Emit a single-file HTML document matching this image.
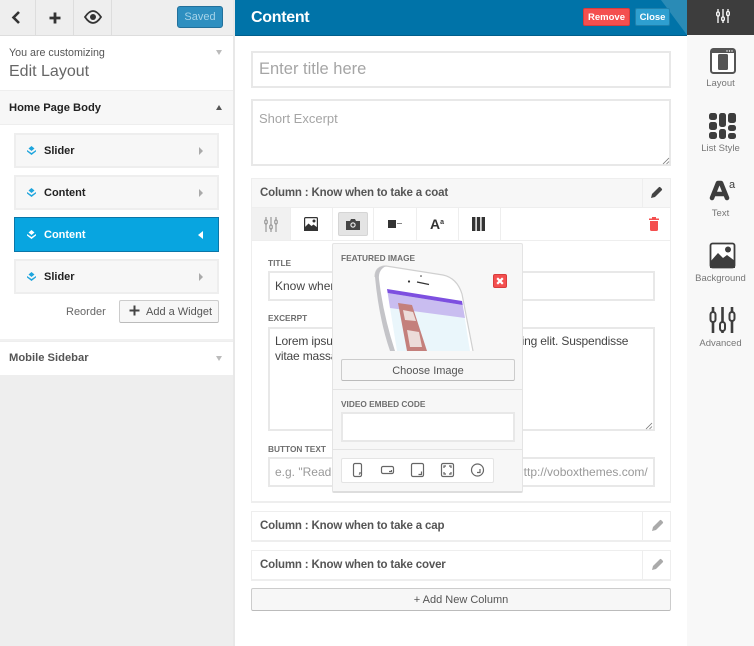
<!DOCTYPE html>
<html><head><meta charset="utf-8"><style>
html,body{margin:0;padding:0;background:#fff}
body{width:754px;height:646px;overflow:hidden;position:relative;font-family:"Liberation Sans",sans-serif;color:#444}
.a{position:absolute;box-sizing:border-box}
.t{position:absolute;white-space:nowrap;line-height:1}
.w{position:absolute;left:14px;width:205px;height:35px;background:#f7f7f7;border:2px solid #eee;box-sizing:border-box}
.w .n{position:absolute;left:28px;top:9px;font-size:11px;font-weight:bold;color:#222;line-height:14px}
.w svg.i{position:absolute;left:11px;top:11px}
.w .ar{position:absolute;right:14px;top:12px;width:0;height:0;border-left:4.5px solid #aaa;border-top:4px solid transparent;border-bottom:4px solid transparent}
.lb{position:absolute;font-size:8.3px;font-weight:bold;color:#6e6e6e;line-height:10px;white-space:nowrap}
.sl{position:absolute;font-size:9.5px;color:#777;width:67px;left:687px;text-align:center;line-height:10px}
.inp{position:absolute;background:#fff;border:2px solid #e8e8e8;box-sizing:border-box}
.ch{position:absolute;left:251px;width:420px;height:31px;background:#fff;border:1px solid #eee;border-bottom:2px solid #eee;box-sizing:border-box}
.ch .n{position:absolute;left:8px;top:7px;font-size:11.5px;letter-spacing:-.17px;font-weight:bold;color:#555;line-height:14px;white-space:nowrap}
.ch .d{position:absolute;right:27px;top:0;bottom:0;width:1px;background:#eee}
.tabd{position:absolute;top:208px;height:32px;width:1px;background:#eee}
</style></head><body>

<!-- left panel -->
<div class="a" style="left:0;top:0;width:235px;height:646px;background:#eee;border-right:2px solid #e8e8e8"></div>
<div class="a" style="left:0;top:0;width:233px;height:36px;background:#eee;border-bottom:1px solid #ddd"></div>
<div class="a" style="left:35px;top:0;width:1px;height:35px;background:#ddd"></div>
<div class="a" style="left:73px;top:0;width:1px;height:35px;background:#ddd"></div>
<div class="a" style="left:111px;top:0;width:1px;height:35px;background:#ddd"></div>
<svg class="a" style="left:11px;top:10px" width="10" height="15"><path d="M8 2 L2.500 7.500 L8 13" fill="none" stroke="#333" stroke-width="2.600"/></svg>
<svg class="a" style="left:49px;top:12px" width="12" height="12"><path d="M6 0.500V11.500M0.500 6H11.500" stroke="#333" stroke-width="2.800"/></svg>
<svg class="a" style="left:84px;top:10px" width="18" height="14"><path d="M1 7C4 2.500 6.500 1 9 1s5 1.500 8 6c-3 4.500-5.500 6-8 6S4 11.500 1 7z" fill="none" stroke="#333" stroke-width="1.800"/><circle cx="9" cy="7" r="3" fill="#333"/></svg>
<div class="a" style="left:177px;top:6px;width:46px;height:22px;background:#2e8fc0;border:1px solid #22709b;border-radius:3px;color:#a6d3e8;font-size:11px;text-align:center;line-height:21px">Saved</div>

<div class="a" style="left:0;top:36px;width:233px;height:55px;background:#fff;border-bottom:1px solid #eee"></div>
<div class="t" style="left:9px;top:48px;font-size:10.7px;color:#555">You are customizing</div>
<div class="t" style="left:9px;top:64px;font-size:16px;color:#666">Edit Layout</div>
<div class="a" style="left:216px;top:50px;width:0;height:0;border-top:5px solid #bbb;border-left:3.500px solid transparent;border-right:3.500px solid transparent"></div>

<div class="a" style="left:0;top:91px;width:233px;height:34px;background:#f7f7f7;border-bottom:1px solid #eee"></div>
<div class="t" style="left:9px;top:103px;font-size:11.2px;font-weight:bold;color:#222">Home Page Body</div>
<div class="a" style="left:216px;top:105px;width:0;height:0;border-bottom:5px solid #555;border-left:3.500px solid transparent;border-right:3.500px solid transparent"></div>

<div class="a" style="left:0;top:125px;width:233px;height:216px;background:#fff;border-bottom:2px solid #f1f1f1"></div>
<div class="w" style="top:133px"><svg class="i" width="9" height="9"><path d="M4.500 0L7.500 2.500L4.500 5L1.500 2.500Z" fill="#1ea5dd"/><path d="M0 4L4.500 7L9 4V5.500L4.500 9L0 5.500Z" fill="#1ea5dd"/></svg><div class="n">Slider</div><div class="ar"></div></div>
<div class="w" style="top:175px"><svg class="i" width="9" height="9"><path d="M4.500 0L7.500 2.500L4.500 5L1.500 2.500Z" fill="#1ea5dd"/><path d="M0 4L4.500 7L9 4V5.500L4.500 9L0 5.500Z" fill="#1ea5dd"/></svg><div class="n">Content</div><div class="ar"></div></div>
<div class="w" style="top:217px;background:#08a5e0;border:1px solid #0a76a8"><svg class="i" style="left:12px;top:12px" width="9" height="9"><path d="M4.500 0L7.500 2.500L4.500 5L1.500 2.500Z" fill="#fff"/><path d="M0 4L4.500 7L9 4V5.500L4.500 9L0 5.500Z" fill="#fff"/></svg><div class="n" style="left:29px;top:10px;color:#fff">Content</div><div class="ar" style="right:15px;top:13px;border-left:0;border-right:5px solid #fff"></div></div>
<div class="w" style="top:259px"><svg class="i" width="9" height="9"><path d="M4.500 0L7.500 2.500L4.500 5L1.500 2.500Z" fill="#1ea5dd"/><path d="M0 4L4.500 7L9 4V5.500L4.500 9L0 5.500Z" fill="#1ea5dd"/></svg><div class="n">Slider</div><div class="ar"></div></div>

<div class="t" style="left:66px;top:307px;font-size:11px;color:#666">Reorder</div>
<div class="a" style="left:119px;top:300px;width:100px;height:23px;background:#f7f7f7;border:1px solid #ccc;border-bottom-color:#bbb;border-radius:2px"></div>
<svg class="a" style="left:129px;top:305px" width="11" height="11"><path d="M5.500 0.500V10.500M0.500 5.500H10.500" stroke="#444" stroke-width="2"/></svg>
<div class="t" style="left:146px;top:307px;font-size:11px;color:#555">Add a Widget</div>

<div class="a" style="left:0;top:342px;width:233px;height:33px;background:#fff"></div>
<div class="t" style="left:9px;top:353px;font-size:11.200px;font-weight:bold;color:#555">Mobile Sidebar</div>
<div class="a" style="left:216px;top:356px;width:0;height:0;border-top:5px solid #bbb;border-left:3.500px solid transparent;border-right:3.500px solid transparent"></div>

<!-- header -->
<div class="a" style="left:235px;top:0;width:452px;height:36px;background:#0073a8;border-bottom:1px solid #005f8c"></div>
<svg class="a" style="left:661px;top:0" width="26" height="35"><path d="M0 0H26V35Z" fill="#2a8bb6"/></svg>
<div class="t" style="left:251px;top:10px;font-size:16px;font-weight:bold;color:#fff;letter-spacing:-.3px">Content</div>
<div class="a" style="left:583px;top:8px;width:47px;height:18px;background:#f44f4f;border:1px solid #d83c3c;border-radius:2px;color:#fff;font-size:9.500px;font-weight:bold;text-align:center;line-height:17px">Remove</div>
<div class="a" style="left:635px;top:8px;width:35px;height:18px;background:#2e9fd0;border:1px solid #1f81ad;border-radius:2px;color:#fff;font-size:9.500px;font-weight:bold;text-align:center;line-height:17px">Close</div>

<!-- right sidebar -->
<div class="a" style="left:687px;top:0;width:67px;height:646px;background:#f8f8f8"></div>
<div class="a" style="left:687px;top:0;width:67px;height:35px;background:#3d3d3d"></div>
<svg class="a" style="left:716px;top:8px" width="14" height="16" fill="none" stroke="#fff" stroke-width="1.300"><path d="M2 1V4M2 8V15M7 1V9M7 12.500V15M12 1V3.500M12 7.500V15"/><rect x="0.700" y="4" width="2.600" height="4" rx="1.300"/><rect x="5.700" y="9" width="2.600" height="3.500" rx="1.300"/><rect x="10.700" y="3.500" width="2.600" height="4" rx="1.300"/></svg>

<svg class="a" style="left:709px;top:48px" width="27" height="26"><rect x="2" y="1" width="24" height="24" rx="2.500" fill="#fff" stroke="#555" stroke-width="2"/><path d="M2 3.500Q2 1 4.500 1H23.500Q26 1 26 3.500V5H2Z" fill="#555"/><rect x="9" y="6" width="10" height="16" rx="1.500" fill="#555"/><circle cx="18" cy="3" r=".7" fill="#fff"/><circle cx="20.500" cy="3" r=".7" fill="#fff"/><circle cx="23" cy="3" r=".7" fill="#fff"/></svg>
<div class="sl" style="top:79px">Layout</div>

<svg class="a" style="left:709px;top:112px" width="27" height="27" fill="#3d3d3d"><rect x="0" y="1" width="8" height="7" rx="2.500"/><rect x="0" y="10" width="8" height="8" rx="2.500"/><rect x="0" y="20" width="8" height="7" rx="2.500"/><rect x="10" y="1" width="7" height="14" rx="2.500"/><rect x="10" y="17" width="7" height="10" rx="2.500"/><rect x="19" y="1" width="8" height="10" rx="2.500"/><rect x="19" y="13" width="8" height="6" rx="2.500"/><rect x="19" y="21" width="8" height="6" rx="2.500"/></svg>
<div class="sl" style="top:144px">List Style</div>

<svg class="a" style="left:709px;top:179px" width="24" height="24"><path d="M3 19L9 4H12L18 19M6.500 15H14.500" fill="none" stroke="#3d3d3d" stroke-width="4.600" stroke-linejoin="round" stroke-linecap="round"/></svg>
<div class="t" style="left:729px;top:180px;font-size:11px;color:#3d3d3d">a</div>
<div class="sl" style="top:209px">Text</div>

<svg class="a" style="left:709px;top:242px" width="27" height="27"><rect x="1.500" y="1.500" width="24" height="24" rx="2" fill="#fff" stroke="#3d3d3d" stroke-width="1.800"/><circle cx="19" cy="7.500" r="3" fill="#3d3d3d"/><path d="M1 20L9 11L14 16L18 13L26 19V26H1Z" fill="#3d3d3d"/></svg>
<div class="sl" style="top:274px">Background</div>

<svg class="a" style="left:709px;top:307px" width="27" height="27" fill="none" stroke="#3d3d3d"><path d="M4 0V5M4 15V26M13.500 0V16M13.500 23V26M23 0V5M23 14V26" stroke-width="2.600"/><rect x="1.500" y="5" width="5" height="10" rx="2.500" stroke-width="2"/><rect x="11" y="15" width="5" height="9" rx="2.500" stroke-width="2"/><rect x="20.500" y="5" width="5" height="9" rx="2.500" stroke-width="2"/></svg>
<div class="sl" style="top:339px">Advanced</div>

<!-- title / excerpt -->
<div class="inp" style="left:251px;top:51px;width:420px;height:37px"></div>
<div class="t" style="left:259px;top:61px;font-size:16.500px;color:#a5a5a5">Enter title here</div>
<div class="inp" style="left:251px;top:99px;width:420px;height:67px"></div>
<div class="t" style="left:259px;top:112px;font-size:13px;color:#a5a5a5">Short Excerpt</div>
<svg class="a" style="left:662px;top:157px" width="8" height="8"><path d="M1 7L7 1M4.500 7L7 4.500" stroke="#777" stroke-width=".8"/></svg>

<!-- open column -->
<div class="a" style="left:251px;top:178px;width:420px;height:325px;background:#fff;border:1px solid #eee;border-bottom-width:2px"></div>
<div class="a" style="left:252px;top:179px;width:418px;height:29px;background:#f7f7f7;border-bottom:1px solid #eee"></div>
<div class="t" style="left:260px;top:188px;font-size:11.500px;letter-spacing:-.17px;font-weight:bold;color:#555">Column : Know when to take a coat</div>
<div class="a" style="left:642px;top:179px;width:1px;height:28px;background:#eee"></div>
<svg class="a" style="left:650px;top:186px" width="13" height="13"><path d="M1 12L2 8L8.800 1.200Q9.500 .5 10.300 1.200L11.800 2.700Q12.500 3.500 11.800 4.200L5 11Z" fill="#444"/></svg>

<div class="a" style="left:252px;top:208px;width:38px;height:32px;background:#f1f1f1"></div>
<div class="a" style="left:252px;top:240px;width:418px;height:1px;background:#eee"></div>
<div class="tabd" style="left:290px"></div><div class="tabd" style="left:332px"></div><div class="tabd" style="left:373px"></div><div class="tabd" style="left:416px"></div><div class="tabd" style="left:458px"></div><div class="tabd" style="left:500px"></div>
<svg class="a" style="left:264px;top:217px" width="14" height="15" fill="none" stroke="#888" stroke-width="1"><path d="M2 0V3M2 7V15M7 0V8M7 12V15M12 0V3M12 7V15"/><rect x=".8" y="3" width="2.400" height="4" rx="1.200"/><rect x="5.800" y="8" width="2.400" height="4" rx="1.200"/><rect x="10.800" y="3" width="2.400" height="4" rx="1.200"/></svg>
<svg class="a" style="left:304px;top:217px" width="14" height="14"><rect x=".6" y=".6" width="12.800" height="12.800" rx="1" fill="#fff" stroke="#333" stroke-width="1.200"/><circle cx="10" cy="4" r="1.500" fill="#333"/><path d="M0 11L4.500 6.500L7.500 9L9.500 7.500L14 11V14H0Z" fill="#333"/></svg>
<div class="a" style="left:338px;top:212px;width:30px;height:24px;background:#e4e4e4;border:1px solid #d5d5d5;border-radius:2px"></div>
<svg class="a" style="left:346px;top:219px" width="14" height="11"><path d="M0 2H4L5 0H9L10 2H14V11H0Z" fill="#444"/><circle cx="7" cy="6" r="2.700" fill="#e4e4e4"/><circle cx="7" cy="6" r="1.500" fill="#444"/></svg>
<svg class="a" style="left:388px;top:220px" width="14" height="9"><rect x="0" y="0" width="8" height="8" fill="#333"/><path d="M9 3.500H14" stroke="#888"/></svg>
<div class="t" style="left:430px;top:217px;font-size:14px;font-weight:bold;color:#333">A<span style="font-size:7px;vertical-align:5px">a</span></div>
<svg class="a" style="left:472px;top:217px" width="13" height="14" fill="#333"><rect x="0" width="3.400" height="14"/><rect x="4.800" width="3.400" height="14"/><rect x="9.600" width="3.400" height="14"/></svg>
<svg class="a" style="left:649px;top:217px" width="10" height="14" fill="#f44f4f"><rect x="0" y="1.500" width="10" height="1.500"/><rect x="3" y="0" width="4" height="2"/><path d="M1 4H9V12.500Q9 14 7.500 14H2.500Q1 14 1 12.500Z"/></svg>

<div class="lb" style="left:268px;top:258px">TITLE</div>
<div class="inp" style="left:268px;top:271px;width:387px;height:30px"></div>
<div class="t" style="left:275px;top:280px;font-size:12px;color:#444">Know when to take a coat</div>
<div class="lb" style="left:268px;top:313px">EXCERPT</div>
<div class="inp" style="left:268px;top:327px;width:387px;height:104px"></div>
<div class="a" style="left:275px;top:334px;width:370px;font-size:12px;line-height:15px;letter-spacing:-.16px;color:#444;white-space:nowrap">Lorem ipsum dolor sit amet, consectetur adipiscing elit. Suspendisse<br>vitae massa</div>
<svg class="a" style="left:645px;top:422px" width="8" height="8"><path d="M1 7L7 1M4.500 7L7 4.500" stroke="#777" stroke-width=".8"/></svg>
<div class="lb" style="left:268px;top:444px">BUTTON TEXT</div>
<div class="inp" style="left:268px;top:457px;width:387px;height:30px"></div>
<div class="t" style="left:275px;top:466px;font-size:12px;color:#999">e.g. "Read More"</div>
<div class="t" style="left:517px;top:466px;font-size:12px;color:#999">http://voboxthemes.com/</div>

<!-- popup -->
<div class="a" style="left:332px;top:243px;width:191px;height:250px;background:#f7f7f7;border:1px solid #e4e4e4;border-bottom:2px solid #ddd;border-radius:2px"></div>
<div class="lb" style="left:341px;top:253px">FEATURED IMAGE</div>
<svg class="a" style="left:372px;top:264px" width="104" height="87">
<path d="M3 13Q3 2 14 2L71 11Q85 14 90 30L101 87H18Z" fill="#fff"/>
<path d="M3 13Q3 2 14 2L71 11Q85 14 90 30L101 87" fill="none" stroke="#d0d0d0" stroke-width="1.200"/>
<path d="M3 13Q7 55 18 87H23Q11 50 7 15Q6 6 14 2Q3 2 3 13Z" fill="#c4c4c8"/>
<path d="M15 25L90 37L98 87H25Z" fill="#eaf6fb"/>
<path d="M15.700 29L90.700 41L93 54L18 44Z" fill="#c9bdf0"/>
<path d="M15 25L90 37L90.700 41L15.700 29Z" fill="#7d4fe0"/>
<path d="M26 39L40 41L55 87H35Z" fill="#c4807c"/>
<path d="M31 46L41 48L44 57L33 56Z M35 66L47 68L50 83L38 83Z" fill="#ecdcd9"/>
<path d="M45 18L57 20.500" stroke="#333" stroke-width="1.200"/><circle cx="37" cy="17.500" r="1.100" fill="#333"/><circle cx="49" cy="12" r=".8" fill="#333"/>
</svg>
<div class="a" style="left:493px;top:274px;width:14px;height:14px;background:#f44f4f;border:1px solid #d83c3c;border-radius:2px"></div>
<svg class="a" style="left:496px;top:277px" width="8" height="8"><path d="M1.200 1.200L6.800 6.800M6.800 1.200L1.200 6.800" stroke="#fff" stroke-width="2.200"/></svg>
<div class="a" style="left:341px;top:359px;width:174px;height:22px;background:#f7f7f7;border:1px solid #ccc;border-bottom-color:#bbb;border-radius:2px;font-size:11px;color:#555;text-align:center;line-height:22px">Choose Image</div>
<div class="a" style="left:333px;top:389px;width:189px;height:1px;background:#e4e4e4"></div>
<div class="lb" style="left:341px;top:399px">VIDEO EMBED CODE</div>
<div class="inp" style="left:341px;top:412px;width:174px;height:30px"></div>
<div class="a" style="left:333px;top:449px;width:189px;height:1px;background:#e4e4e4"></div>
<div class="a" style="left:341px;top:458px;width:153px;height:25px;background:#fff;border:1px solid #e4e4e4;border-radius:2px"></div>
<svg class="a" style="left:350px;top:462px" width="136" height="16" fill="none" stroke="#666" stroke-width="1.200">
<rect x="3.500" y="1.500" width="8" height="13" rx="1.500"/><path d="M9 12.500L10 11.500V10"/>
<rect x="31.500" y="4.500" width="12" height="7" rx="1.500"/><path d="M39 9.500H41.500V8"/>
<rect x="61.500" y="1.500" width="12" height="13" rx="1.500"/><path d="M68.500 12.500H71.500V9.500"/>
<rect x="91.500" y="1.500" width="12" height="13" rx="1.500"/><path d="M94 6V4H96M101 6V4H99M94 10V12H96M101 10V12H99"/>
<circle cx="127.500" cy="8" r="6"/><path d="M130 7V10.500H127"/>
</svg>

<!-- closed columns -->
<div class="ch" style="top:511px"><div class="n">Column : Know when to take a cap</div><div class="d"></div><svg class="a" style="left:399px;top:7px" width="13" height="13"><path d="M1 12L2 8L8.800 1.200Q9.500 .5 10.300 1.200L11.800 2.700Q12.500 3.500 11.800 4.200L5 11Z" fill="#aaa"/></svg></div>
<div class="ch" style="top:550px"><div class="n">Column : Know when to take cover</div><div class="d"></div><svg class="a" style="left:399px;top:7px" width="13" height="13"><path d="M1 12L2 8L8.800 1.200Q9.500 .5 10.300 1.200L11.800 2.700Q12.500 3.500 11.800 4.200L5 11Z" fill="#aaa"/></svg></div>
<div class="a" style="left:251px;top:588px;width:420px;height:23px;background:#f7f7f7;border:1px solid #ccc;border-bottom-color:#bbb;border-radius:2px;font-size:11px;color:#555;text-align:center;line-height:22px">+ Add New Column</div>
</body></html>
